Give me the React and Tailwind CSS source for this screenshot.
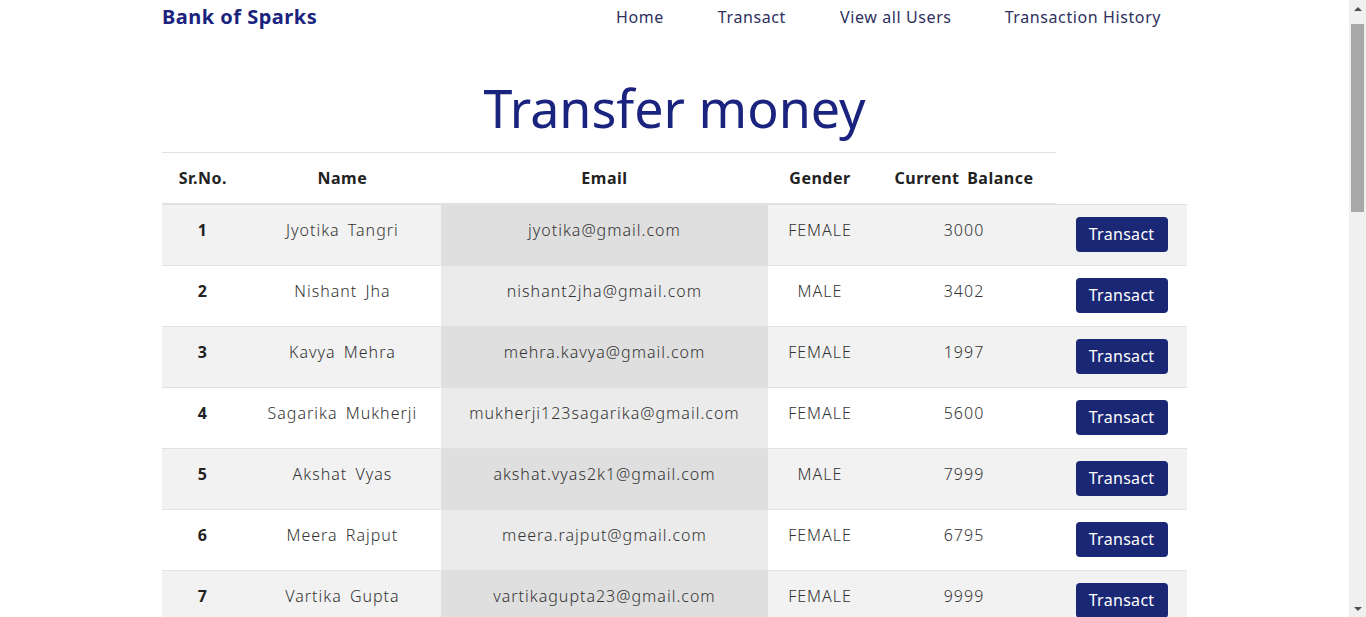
const users = [
  { id: 1, name: 'Jyotika Tangri', email: 'jyotika@gmail.com', gender: 'FEMALE', balance: 3000 },
  { id: 2, name: 'Nishant Jha', email: 'nishant2jha@gmail.com', gender: 'MALE', balance: 3402 },
  { id: 3, name: 'Kavya Mehra', email: 'mehra.kavya@gmail.com', gender: 'FEMALE', balance: 1997 },
  { id: 4, name: 'Sagarika Mukherji', email: 'mukherji123sagarika@gmail.com', gender: 'FEMALE', balance: 5600 },
  { id: 5, name: 'Akshat Vyas', email: 'akshat.vyas2k1@gmail.com', gender: 'MALE', balance: 7999 },
  { id: 6, name: 'Meera Rajput', email: 'meera.rajput@gmail.com', gender: 'FEMALE', balance: 6795 },
  { id: 7, name: 'Vartika Gupta', email: 'vartikagupta23@gmail.com', gender: 'FEMALE', balance: 9999 },
];

function Navbar() {
  return (
    <nav className="flex items-center justify-between h-[34px]">
      <a href="#" className="text-[20px] font-bold text-[#1a237e] tracking-[0.5px]">
        Bank of Sparks
      </a>
      <ul className="flex items-center text-[16px] text-[#2e3060] tracking-[0.6px]">
        <li><a href="#" className="px-[27px]">Home</a></li>
        <li><a href="#" className="px-[27px]">Transact</a></li>
        <li><a href="#" className="px-[27px]">View all Users</a></li>
        <li><a href="#" className="px-[26px]">Transaction History</a></li>
      </ul>
    </nav>
  );
}

// window scrollbar as seen in the screenshot
function Scrollbar() {
  return (
    <div className="w-[17px] shrink-0 bg-[#f0f0f0] flex flex-col items-center">
      <div className="h-[17px] flex items-center justify-center">
        <div className="w-0 h-0 border-l-[4px] border-r-[4px] border-b-[4px] border-l-transparent border-r-transparent border-b-[#505050]" />
      </div>
      <div className="w-[13px] h-[188px] mt-[7px] bg-[#a8a8a8]" />
      <div className="flex-1" />
      <div className="h-[17px] flex items-center justify-center">
        <div className="w-0 h-0 border-l-[4px] border-r-[4px] border-t-[4px] border-l-transparent border-r-transparent border-t-[#505050]" />
      </div>
    </div>
  );
}

const th = 'border-t border-b-2 border-[#dee2e6] pt-[13px] pb-[13px] leading-6 font-bold tracking-[0.5px] [word-spacing:3px]';
const td = 'border-t border-[#dee2e6] pt-[13px] pb-3 leading-6 align-top text-center';

function App() {
  return (
    <div className="h-screen flex bg-white overflow-hidden" style={{ fontFamily: '"Noto Sans", "Open Sans", sans-serif' }}>
      <main className="flex-1 min-w-0">
        <div className="w-[76%] mx-auto">
          <Navbar />

          <h1 className="text-center text-[52px] leading-[62px] text-[#1a237e] mt-[43px] mb-[13px]">
            Transfer money
          </h1>

          <table className="w-full table-fixed border-collapse text-[16px] text-[#333]">
            <colgroup>
              <col className="w-[82px]" />
              <col className="w-[197px]" />
              <col className="w-[327px]" />
              <col className="w-[104px]" />
              <col className="w-[184px]" />
              <col className="w-[131px]" />
            </colgroup>
            <thead>
              <tr className="text-[#222]">
                <th className={th}>Sr.No.</th>
                <th className={th}>Name</th>
                <th className={th}>Email</th>
                <th className={th}>Gender</th>
                <th className={th}>Current Balance</th>
              </tr>
            </thead>
            <tbody className="tracking-[1px] [word-spacing:3px]">
              {users.map((u, i) => (
                <tr key={u.id} className={i % 2 === 0 ? 'bg-[#f2f2f2]' : 'bg-white'}>
                  <td className={`${td} h-[61px] font-bold text-[#222]`}>{u.id}</td>
                  <td className={`${td} font-light`}>{u.name}</td>
                  <td className={`${td} font-light ${i % 2 === 0 ? 'bg-[#dfdfdf]' : 'bg-[#ebebeb]'}`}>{u.email}</td>
                  <td className={`${td} font-light`}>{u.gender}</td>
                  <td className={`${td} font-light`}>{u.balance}</td>
                  <td className="border-t border-[#dee2e6] pt-3 align-top text-center">
                    <button className="bg-[#1a2775] text-white text-[16px] leading-6 tracking-[0.3px] rounded-[4px] w-[92px] h-[35px]">
                      Transact
                    </button>
                  </td>
                </tr>
              ))}
            </tbody>
          </table>
        </div>
      </main>
      <Scrollbar />
    </div>
  );
}

export default App;
